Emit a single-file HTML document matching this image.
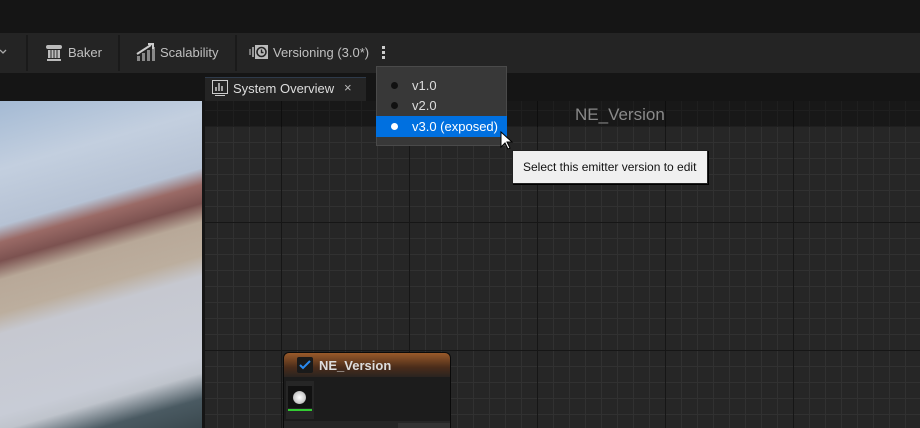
<!DOCTYPE html><html><head><style>
*{margin:0;padding:0;box-sizing:border-box}
html,body{width:920px;height:428px;overflow:hidden}
body{background:#151515;font-family:"Liberation Sans",sans-serif;position:relative;color:#c0c0c0}
.a{position:absolute}
.tb{top:33px;left:0;width:920px;height:40px;background:#242424}
.sep{top:35px;width:2px;height:36px;background:#1a1a1a}
.t{font-size:13px;color:#c0c0c0;top:45px}
.grid{left:205px;top:101px;width:715px;height:327px;background-color:#262626;
background-image:
linear-gradient(90deg,#161616 0 1px,transparent 1px),
linear-gradient(180deg,#161616 0 1px,transparent 1px),
linear-gradient(90deg,#313131 0 1px,transparent 1px),
linear-gradient(180deg,#313131 0 1px,transparent 1px);
background-size:128px 100%,100% 128px,16px 16px,16px 16px;
background-position:76px 0,0 121px,12px 0,0 9px}
.view{left:0;top:101px;width:202px;height:327px;
background:linear-gradient(164deg,#a4bad4 0,#c3cfdf 66px,#b6c2d4 120px,#9a6a66 136px,#7c5250 154px,#b8a898 172px,#bcae9e 204px,#c6c8d0 224px,#c8ccd6 302px,#bfc4cc 317px,#4a5a62 342px,#3a484e 370px)}
</style></head><body>
<div class="a tb"></div>
<div class="a sep" style="left:26px"></div>
<div class="a sep" style="left:118px"></div>
<div class="a sep" style="left:235px"></div>
<svg class="a" style="left:0;top:48px" width="8" height="8"><path d="M0 2l3 3 3-3" stroke="#aaa" fill="none" stroke-width="1.3"/></svg>
<svg class="a" style="left:45px;top:43px" width="18" height="18"><rect x="1" y="2" width="16" height="4" rx="2" fill="#bbb"/><rect x="3" y="7" width="12" height="8" fill="#bbb"/><rect x="2" y="16" width="14" height="2" fill="#bbb"/><path d="M6 7v8M9 7v8M12 7v8" stroke="#242424"/></svg>
<div class="a t" style="left:68px">Baker</div>
<svg class="a" style="left:136px;top:43px" width="20" height="18"><rect x="1" y="13" width="3" height="5" fill="#888"/><rect x="6" y="10" width="3" height="8" fill="#888"/><rect x="11" y="7" width="3" height="11" fill="#888"/><rect x="16" y="4" width="3" height="14" fill="#888"/><path d="M1 11L15 2" stroke="#ccc" stroke-width="2"/><path d="M12 1h5v5" stroke="#ccc" stroke-width="2" fill="none"/></svg>
<div class="a t" style="left:160px">Scalability</div>
<svg class="a" style="left:249px;top:44px" width="20" height="16"><rect x="0" y="5" width="2" height="6" fill="#777"/><rect x="3" y="3" width="2" height="10" fill="#999"/><rect x="6" y="1" width="13" height="14" fill="#bbb"/><circle cx="12.5" cy="8" r="4.5" fill="none" stroke="#242424" stroke-width="1.6"/><path d="M12.5 5.5v3h2" stroke="#242424" stroke-width="1.4" fill="none"/></svg>
<div class="a t" style="left:273px">Versioning (3.0*)</div>
<div class="a" style="left:382px;top:46px;width:3px;height:3px;background:#ccc;box-shadow:0 5px #ccc,0 10px #ccc"></div>
<div class="a view"></div>
<div class="a" style="left:205px;top:77px;width:161px;height:24px;background:#242424;border-top:1px solid #2e3a4a"></div>
<svg class="a" style="left:212px;top:80px" width="16" height="16"><rect x="0.5" y="0.5" width="15" height="13" fill="none" stroke="#ccc"/><path d="M4 11V7M7 11V3M10 11V6" stroke="#ccc" stroke-width="1.5"/><path d="M3 15.5h10" stroke="#ccc"/></svg>
<div class="a" style="left:233px;top:81px;font-size:13px;color:#ddd">System Overview</div>
<div class="a" style="left:344px;top:80px;font-size:13px;color:#bbb">×</div>
<div class="a grid"></div>
<div class="a" style="left:205px;top:101px;width:715px;height:26px;background:rgba(0,0,0,0.35)"></div>
<div class="a" style="left:575px;top:105px;font-size:17px;color:#8a8a8a">NE_Version</div>
<div class="a" style="left:376px;top:66px;width:131px;height:80px;background:#383838;border:1px solid #4a4a4a"></div>
<div class="a" style="left:376px;top:116px;width:131px;height:21px;background:#0070e0"></div>
<div class="a" style="left:391px;top:82px;width:7px;height:7px;border-radius:50%;background:#111"></div>
<div class="a" style="left:391px;top:102px;width:7px;height:7px;border-radius:50%;background:#111"></div>
<div class="a" style="left:391px;top:123px;width:7px;height:7px;border-radius:50%;background:#fff"></div>
<div class="a" style="left:412px;top:78px;font-size:13px;color:#ddd">v1.0</div>
<div class="a" style="left:412px;top:98px;font-size:13px;color:#ddd">v2.0</div>
<div class="a" style="left:412px;top:119px;font-size:13px;color:#fff">v3.0 (exposed)</div>
<svg class="a" style="left:500px;top:131px" width="14" height="20"><path d="M1 1v15l4-4 3 6 2-1-3-6h5z" fill="#fff" stroke="#000"/></svg>
<div class="a" style="left:512px;top:150px;width:196px;height:34px;background:#f0f0f0;border:1px solid #222;box-shadow:1px 1px 0 #000"></div>
<div class="a" style="left:523px;top:160px;font-size:12px;color:#111">Select this emitter version to edit</div>
<div class="a" style="left:283px;top:352px;width:168px;height:76px;background:#1c1c1c;border:1px solid #0a0a0a;border-bottom:none;border-radius:6px 6px 0 0"></div>
<div class="a" style="left:284px;top:353px;width:166px;height:24px;border-radius:5px 5px 0 0;background:linear-gradient(180deg,#9a5a2a,#4a2c1a 60%,#2a2420)"></div>
<div class="a" style="left:297px;top:357px;width:16px;height:16px;background:#1a1a1a;border-radius:2px"></div>
<svg class="a" style="left:299px;top:359px" width="12" height="12"><path d="M1 6l3 3 7-7" stroke="#2a8af0" stroke-width="2" fill="none"/></svg>
<div class="a" style="left:319px;top:358px;font-size:13px;font-weight:bold;color:#ddd">NE_Version</div>
<div class="a" style="left:286px;top:381px;width:28px;height:38px;background:#262626"></div>
<div class="a" style="left:288px;top:386px;width:24px;height:22px;background:#111"></div>
<div class="a" style="left:293px;top:391px;width:13px;height:13px;border-radius:50%;background:radial-gradient(#fff,#ccc 60%,#777)"></div>
<div class="a" style="left:288px;top:409px;width:24px;height:2px;background:#3c3"></div>
<div class="a" style="left:284px;top:421px;width:166px;height:7px;background:#262626"></div>
<div class="a" style="left:398px;top:423px;width:52px;height:5px;background:#333"></div>
</body></html>
